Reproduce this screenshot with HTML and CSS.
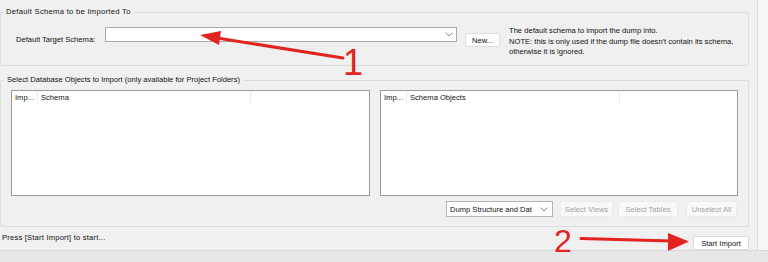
FILE: index.html
```html
<!DOCTYPE html>
<html lang="en">
<head>
    <meta charset="UTF-8">
    <meta name="viewport" content="width=device-width, initial-scale=1.0">
    <title>Data Import</title>
    <link rel="stylesheet" href="styles.css">
</head>
<body>
    <div class="window">
        <div class="main">
            <fieldset class="group group-target">
                <legend>Default Schema to be Imported To</legend>
                <div class="target-row">
                    <label class="target-label">Default Target Schema:</label>
                    <div class="combo combo-schema">
                        <svg class="chevron" width="8" height="5" viewBox="0 0 8 5"><polyline points="0.5,0.5 4,4 7.5,0.5" /></svg>
                    </div>
                    <button class="btn btn-new">New...</button>
                    <p class="note">The default schema to import the dump into.<br>NOTE: this is only used if the dump file doesn't contain its schema,<br>otherwise it is ignored.</p>
                </div>
            </fieldset>

            <fieldset class="group group-objects">
                <legend>Select Database Objects to Import (only available for Project Folders)</legend>
                <div class="lists">
                    <div class="list list-left">
                        <div class="list-head">
                            <span class="col col-imp">Imp...</span>
                            <span class="col col-name">Schema</span>
                        </div>
                    </div>
                    <div class="list list-right">
                        <div class="list-head">
                            <span class="col col-imp">Imp...</span>
                            <span class="col col-name">Schema Objects</span>
                        </div>
                    </div>
                </div>
                <div class="actions">
                    <div class="combo combo-dump">
                        <span>Dump Structure and Dat</span>
                        <svg class="chevron" width="8" height="5" viewBox="0 0 8 5"><polyline points="0.5,0.5 4,4 7.5,0.5" /></svg>
                    </div>
                    <button class="btn btn-views" disabled>Select Views</button>
                    <button class="btn btn-tables" disabled>Select Tables</button>
                    <button class="btn btn-unselect" disabled>Unselect All</button>
                </div>
            </fieldset>

            <div class="status-row">
                <span class="status">Press [Start Import] to start...</span>
                <button class="btn btn-start">Start Import</button>
            </div>
        </div>
        <div class="side"></div>
    </div>
    <div class="footer"></div>

    <!-- annotation arrows drawn over the screenshot -->
    <svg class="marks" width="768" height="262" viewBox="0 0 768 262">
        <line x1="343" y1="58" x2="214" y2="37.5" />
        <polygon points="200,35 221,31 219,45" />
        <text x="343" y="75" font-size="36">1</text>

        <line x1="581" y1="238.5" x2="672" y2="241" />
        <polygon points="689,241.5 668,233 668,251" />
        <text x="554" y="252" font-size="32">2</text>
    </svg>
</body>
</html>
```

FILE: styles.css
```css
body {
    margin: 0;
    width: 768px;
    height: 262px;
    overflow: hidden;
    position: relative;
    background-color: #f0f0f0;
    font-family: "Liberation Sans", Arial, sans-serif;
    font-size: 7.6px;
    color: #111;
}

.window {
    display: flex;
    height: 250px;
}

.main {
    width: 757px;
    flex: none;
}

.side {
    flex: 1;
    background-color: #f6f6f6;
    border-left: 1px solid #dcdcdc;
}

.footer {
    height: 12px;
    box-sizing: border-box;
    background-color: #e7e7e7;
    border-top: 1px solid #d9d9d9;
}

/* group boxes */
.group {
    margin: 0;
    padding: 0;
    width: 749px;
    min-width: 0;
    box-sizing: border-box;
    border: 1px solid #dcdcdc;
    border-radius: 2px;
}

.group legend {
    padding: 0 3px;
    margin-left: 3px;
    line-height: 10px;
}

.group-target {
    margin-top: 7px;
}

.group-target legend {
    margin-left: 2px;
    letter-spacing: 0.3px;
}

.group-objects {
    margin-top: 9px;
}

.target-row {
    display: flex;
    align-items: flex-start;
    height: 48px;
}

.target-label {
    width: 89px;
    margin: 18px 0 0 15px;
    line-height: 10px;
}

.combo {
    box-sizing: border-box;
    display: flex;
    align-items: center;
    justify-content: space-between;
    background-color: #fff;
    border: 1px solid #a9a9a9;
}

.combo-schema {
    width: 352px;
    height: 15px;
    margin-top: 10px;
    justify-content: flex-end;
    padding-right: 3px;
}

.chevron polyline {
    fill: none;
    stroke: #8a8a8a;
    stroke-width: 1;
}

.btn {
    box-sizing: border-box;
    padding: 0;
    font: inherit;
    color: #111;
    background-color: #fdfdfd;
    border: 1px solid #e0e0e0;
    border-radius: 1px;
}

.btn:disabled {
    color: #a3a3a3;
    background-color: #f8f8f8;
    border-color: #ebebeb;
}

.btn-new {
    width: 35px;
    height: 14px;
    margin: 16px 0 0 8px;
}

.note {
    margin: 9px 0 0 9px;
    line-height: 10.5px;
}

/* object lists */
.lists {
    display: flex;
    gap: 10px;
    padding: 5px 10px 0;
}

.list {
    box-sizing: border-box;
    height: 106px;
    background-color: #fff;
    border: 1px solid #9a9a9a;
}

.list-left {
    width: 359px;
}

.list-right {
    width: 358px;
}

.list-head {
    display: flex;
    height: 14px;
    line-height: 13px;
}

.col {
    box-sizing: border-box;
    padding-left: 3px;
    border-right: 1px solid #ececec;
}

.col-imp {
    width: 26px;
}

.col-name {
    width: 213px;
}

.actions {
    display: flex;
    justify-content: flex-end;
    height: 16px;
    padding: 5px 11px 9px 0;
}

.combo-dump {
    width: 107px;
    height: 16px;
    padding: 0 4px 0 3px;
    border-color: #b4b4b4;
}

.btn-views {
    width: 53px;
    margin-left: 7px;
}

.btn-tables {
    width: 60px;
    margin-left: 5px;
}

.btn-unselect {
    width: 51px;
    margin-left: 8px;
}

.status-row {
    display: flex;
    justify-content: space-between;
    align-items: flex-end;
    width: 749px;
    height: 23px;
    box-sizing: border-box;
    padding-left: 2px;
}

.status {
    line-height: 10px;
    margin-bottom: 7px;
    letter-spacing: 0.2px;
}

.btn-start {
    width: 56px;
    height: 14px;
    background-color: #fff;
    border-color: #dadada;
}

/* red annotations */
.marks {
    position: absolute;
    left: 0;
    top: 0;
    pointer-events: none;
}

.marks line {
    stroke: #e2231f;
    stroke-width: 3;
    stroke-linecap: round;
}

.marks polygon {
    fill: #e2231f;
}

.marks text {
    fill: #e2231f;
    font-family: "Liberation Sans", Arial, sans-serif;
}
```
